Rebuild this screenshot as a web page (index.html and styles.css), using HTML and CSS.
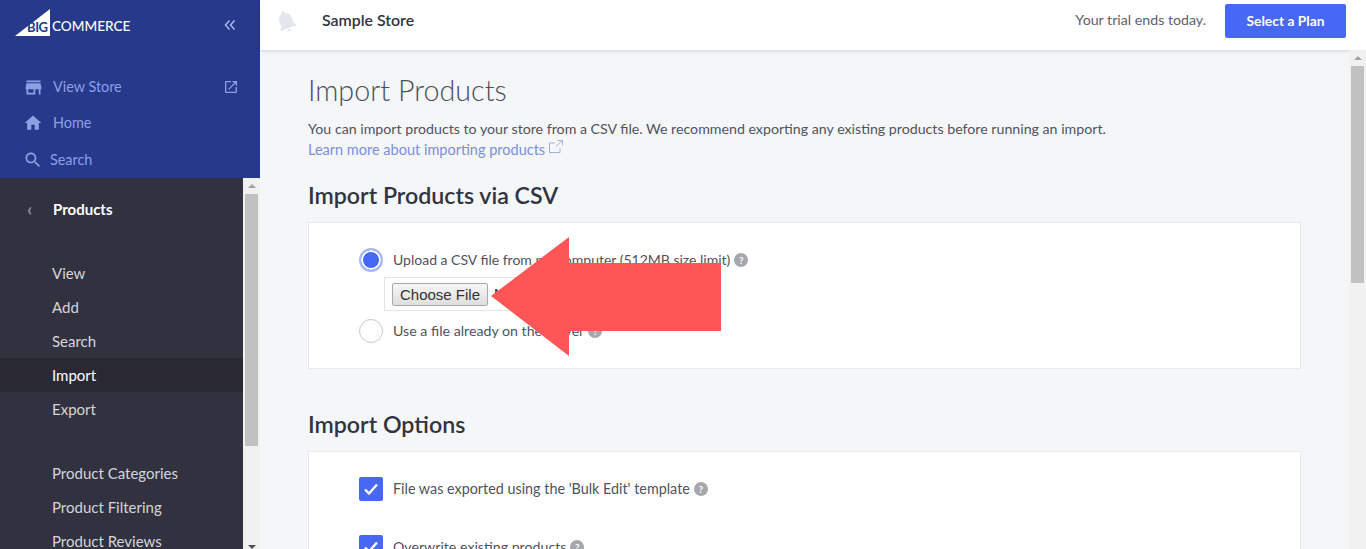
FILE: index.html
```html
<!DOCTYPE html>
<html lang="en">
<head>
	<meta charset="UTF-8">
	<title>Import Products</title>
	<link rel="stylesheet" href="styles.css">
</head>
<body>
	<div class="app">
		<aside class="sidebar">
			<div class="sidebar-top">
				<div class="brand">
					<div class="logo">
						<svg class="logo-mark" viewBox="0 0 35 27"><polygon points="0,27 35,0 35,27" fill="#fff"/></svg>
						<span class="logo-big">BIG</span>
						<span class="logo-commerce">COMMERCE</span>
					</div>
					<svg class="collapse" viewBox="0 0 12 12"><path d="M5.5 1.5L1.5 6l4 4.500M10.500 1.500L6.500 6l4 4.500" fill="none" stroke="currentColor" stroke-width="1.500"/></svg>
				</div>
				<a class="top-link view-store">
					<svg class="icon icon-store" viewBox="0 0 24 24"><path d="M20 4H4v2h16V4zm1 10v-2l-1-5H4l-1 5v2h1v6h10v-6h4v6h2v-6h1zm-9 4H6v-4h6v4z"/></svg>
					<span class="grow">View Store</span>
					<svg class="icon-new" viewBox="0 0 24 24"><path d="M19 19H5V5h7V3H5c-1.110 0-2 .9-2 2v14c0 1.100.89 2 2 2h14c1.100 0 2-.9 2-2v-7h-2v7zM14 3v2h3.590l-9.830 9.830 1.410 1.410L19 6.410V10h2V3h-7z"/></svg>
				</a>
				<a class="top-link">
					<svg class="icon" viewBox="0 0 24 24"><path d="M10 20v-6h4v6h5v-8h3L12 3 2 12h3v8z"/></svg>
					<span class="top-label">Home</span>
				</a>
				<a class="top-link search-link">
					<svg class="icon" viewBox="0 0 24 24"><path d="M15.500 14h-.79l-.28-.27C15.410 12.590 16 11.110 16 9.500 16 5.910 13.090 3 9.500 3S3 5.910 3 9.500 5.910 16 9.500 16c1.610 0 3.090-.59 4.230-1.570l.27.28v.79l5 4.990L20.490 19l-4.990-5zm-6 0C7.010 14 5 11.990 5 9.500S7.010 5 9.500 5 14 7.010 14 9.500 11.990 14 9.500 14z"/></svg>
					<span>Search</span>
				</a>
			</div>
			<div class="sidebar-bottom">
				<nav class="subnav">
					<div class="subnav-title"><span class="back">&lsaquo;</span>Products</div>
					<ul class="subnav-list">
						<li>View</li>
						<li>Add</li>
						<li>Search</li>
						<li class="active">Import</li>
						<li>Export</li>
					</ul>
					<ul class="subnav-list">
						<li>Product Categories</li>
						<li>Product Filtering</li>
						<li>Product Reviews</li>
					</ul>
				</nav>
				<div class="scrollbar">
					<span class="arrow up"></span>
					<span class="thumb thumb-side"></span>
					<span class="arrow down"></span>
				</div>
			</div>
		</aside>

		<div class="page">
			<header class="topbar">
				<svg class="bell" viewBox="0 0 24 24"><path d="M12 22c1.100 0 2-.9 2-2h-4c0 1.100.89 2 2 2zm6-6v-5c0-3.070-1.640-5.640-4.500-6.320V4c0-.83-.67-1.500-1.500-1.500s-1.500.67-1.500 1.500v.68C7.630 5.360 6 7.920 6 11v5l-2 2v1h16v-1l-2-2z"/></svg>
				<span class="store-name">Sample Store</span>
				<span class="trial">Your trial ends today.</span>
				<button class="btn-plan">Select a Plan</button>
			</header>
			<div class="page-body">
				<main class="content">
					<h1>Import Products</h1>
					<p class="intro">You can import products to your store from a CSV file. We recommend exporting any existing products before running an import.</p>
					<a class="learn">Learn more about importing products<svg class="learn-icon" viewBox="0 0 16 16"><path d="M12 9v4.500H1.500V4H7M9.500 1.500h5v5M14.500 1.500L8 7.500" fill="none" stroke="currentColor"/></svg></a>

					<h2>Import Products via CSV</h2>
					<section class="panel panel-csv">
						<div class="field">
							<span class="radio checked"></span>
							<span class="label label-upload">Upload a CSV file from my computer (512MB size limit)</span>
							<span class="help">?</span>
						</div>
						<div class="file-box">
							<button class="btn-file">Choose File</button>
							<span class="file-name">No file chosen</span>
						</div>
						<div class="field">
							<span class="radio"></span>
							<span class="label">Use a file already on the server</span>
							<span class="help">?</span>
						</div>
					</section>

					<h2 class="options-title">Import Options</h2>
					<section class="panel panel-options">
						<div class="field check-field">
							<span class="checkbox"><svg viewBox="0 0 24 24"><path d="M6 12.500l4 4 8-9" fill="none" stroke="#fff" stroke-width="2.400"/></svg></span>
							<span class="label label-bulk">File was exported using the 'Bulk Edit' template</span>
							<span class="help">?</span>
						</div>
						<div class="field check-field">
							<span class="checkbox"><svg viewBox="0 0 24 24"><path d="M6 12.500l4 4 8-9" fill="none" stroke="#fff" stroke-width="2.400"/></svg></span>
							<span class="label">Overwrite existing products</span>
							<span class="help">?</span>
						</div>
					</section>
				</main>
				<div class="scrollbar">
					<span class="arrow up"></span>
					<span class="thumb thumb-main"></span>
				</div>
			</div>
		</div>
	</div>

	<svg class="callout" viewBox="0 0 232 120"><polygon points="0,59 78,0 78,26 230,26 230,94 78,94 78,119" fill="#fe5656"/></svg>
</body>
</html>
```

FILE: styles.css
```css
* {
	box-sizing: border-box;
}

html, body {
	height: 100%;
}

body {
	margin: 0;
	overflow: hidden;
	font-family: "Lato", "Noto Sans", sans-serif;
	font-size: 15px;
	color: #4f5360;
	background-color: #f5f6f8;
}

.app {
	display: flex;
	height: 100%;
}

/* Sidebar */
.sidebar {
	display: flex;
	flex-direction: column;
	flex: none;
	width: 260px;
	height: 100%;
}

.sidebar-top {
	flex: none;
	height: 178px;
	background-color: #26398b;
	color: #8f9fe6;
}

.brand {
	display: flex;
	align-items: center;
	justify-content: space-between;
	height: 50px;
	padding: 0 24px 0 15px;
}

.logo {
	position: relative;
	display: flex;
	align-items: flex-end;
	width: 116px;
	height: 27px;
	margin-top: -6px;
}

.logo-mark {
	width: 35px;
	height: 27px;
}

.logo-big {
	position: absolute;
	left: 12px;
	bottom: 2px;
	font-size: 13px;
	font-weight: 700;
	line-height: 14px;
	letter-spacing: -.4px;
	color: #26398b;
}

.logo-commerce {
	margin: 0 0 2px 2px;
	font-size: 13.600px;
	font-weight: 500;
	color: #fff;
}

.collapse {
	width: 12px;
	height: 12px;
	color: #a9b6f0;
}

.top-link {
	display: flex;
	align-items: center;
	height: 36px;
	padding: 0 21px 0 23px;
	font-size: 14.400px;
}

.view-store {
	margin-top: 19px;
}

.search-link {
	height: 37px;
}

.grow {
	flex: 1;
	margin-bottom: 2px;
}

.top-label {
	margin-bottom: 2px;
}

.icon {
	flex: none;
	width: 20px;
	height: 20px;
	margin-right: 10px;
	fill: currentColor;
}

.icon-store {
	width: 21px;
	height: 21px;
	margin-right: 9px;
}

.search-link .icon {
	margin-right: 7px;
}

.icon-new {
	width: 16px;
	height: 16px;
	fill: currentColor;
}

.sidebar-bottom {
	display: flex;
	flex: 1;
	min-height: 0;
	background-color: #32313f;
}

.subnav {
	flex: 1;
	min-width: 0;
	overflow: hidden;
	color: #d5d5da;
}

.subnav-title {
	display: flex;
	align-items: center;
	height: 62px;
	padding-left: 27px;
	font-weight: 700;
	color: #fff;
}

.back {
	width: 26px;
	font-size: 18px;
	color: #8d8d96;
}

.subnav-list {
	margin: 0 0 30px;
	padding: 0;
	list-style: none;
}

.subnav-list:first-of-type {
	margin-top: 16px;
}

.subnav-list li {
	height: 34px;
	padding-left: 52px;
	line-height: 34px;
}

.subnav-list li.active {
	background-color: #2a2933;
	color: #fff;
}

/* Scrollbars */
.scrollbar {
	position: relative;
	display: flex;
	flex-direction: column;
	flex: none;
	align-items: center;
	width: 17px;
	background-color: #f1f1f1;
}

.thumb {
	width: 13px;
	background-color: #c1c1c1;
}

.thumb-side {
	height: 252px;
	margin-top: 6px;
}

.thumb-main {
	height: 217px;
	margin-top: 6px;
}

.arrow {
	flex: none;
	width: 0;
	height: 0;
	margin-top: 6px;
	border-left: 4px solid transparent;
	border-right: 4px solid transparent;
}

.arrow.up {
	border-bottom: 4px solid #a3a3a3;
}

.arrow.down {
	margin-top: auto;
	margin-bottom: 0;
	border-top: 4px solid #505050;
}

/* Top bar */
.page {
	display: flex;
	flex-direction: column;
	flex: 1;
	min-width: 0;
}

.topbar {
	position: relative;
	display: flex;
	flex: none;
	align-items: center;
	height: 50px;
	padding: 0 20px 8px 13px;
	background-color: #fff;
	box-shadow: 0 1px 3px rgba(0, 0, 0, .15);
}

.bell {
	width: 26px;
	height: 26px;
	margin-right: 23px;
	fill: #e3e6ec;
	transform: rotate(-20deg);
}

.store-name {
	flex: 1;
	margin-bottom: 4px;
	font-size: 15.900px;
	font-weight: 600;
	color: #313440;
}

.trial {
	margin: 0 19px 4px 0;
	font-size: 14.200px;
	color: #5d616c;
}

.btn-plan {
	width: 121px;
	height: 34px;
	padding: 0 0 2px;
	border: none;
	border-radius: 2px;
	background-color: #4767f5;
	color: #fff;
	font-family: inherit;
	font-size: 13.800px;
	font-weight: 700;
}

/* Content */
.page-body {
	display: flex;
	flex: 1;
	min-height: 0;
}

.content {
	flex: 1;
	min-width: 0;
	overflow: hidden;
	padding: 0 48px;
	font-size: 14.200px;
}

h1 {
	margin: 21px 0 0;
	font-size: 28.700px;
	font-weight: 300;
	line-height: 38px;
	color: #4b4f5c;
}

.intro {
	margin: 10px 0 0;
	line-height: 20px;
}

.learn {
	display: flex;
	align-items: flex-start;
	height: 20px;
	font-size: 14.500px;
	line-height: 22px;
	color: #7b8fdb;
}

.learn-icon {
	flex: none;
	width: 16px;
	height: 16px;
	margin-left: 3px;
	color: #a5afd9;
}

h2 {
	margin: 21px 0 12px;
	font-size: 23.200px;
	font-weight: 600;
	line-height: 30px;
	color: #313440;
}

.options-title {
	margin-top: 40px;
}

.panel {
	padding: 25px 50px;
	background-color: #fff;
	border: 1px solid #e8eaee;
}

.panel-csv {
	height: 147px;
}

.field {
	display: flex;
	align-items: center;
	gap: 10px;
	height: 24px;
}

.label {
	margin-bottom: 2px;
}

.label-upload {
	font-size: 14px;
}

.label-bulk {
	font-size: 14.350px;
}

.radio {
	flex: none;
	width: 24px;
	height: 24px;
	border: 1px solid #c8cad0;
	border-radius: 50%;
	background-color: #fff;
}

.radio.checked {
	border: 2px solid #a9b8f8;
	box-shadow: inset 0 0 0 2px #fff;
	background-color: #4767f5;
}

.help {
	flex: none;
	width: 14px;
	height: 14px;
	margin-left: -6px;
	border-radius: 50%;
	background-color: #a5a7ac;
	color: #fff;
	font-size: 10px;
	font-weight: 700;
	line-height: 14px;
	text-align: center;
}

.file-box {
	display: flex;
	align-items: center;
	gap: 6px;
	width: 240px;
	height: 34px;
	margin: 5px 0 8px 25px;
	padding-left: 7px;
	border: 1px solid #e3e4e8;
}

.btn-file {
	width: 96px;
	height: 23px;
	padding: 0;
	border: 1px solid #a9a9a9;
	border-radius: 2px;
	background: linear-gradient(#f6f6f6, #dedede);
	color: #333;
	font-family: "Liberation Sans", Arial, sans-serif;
	font-size: 15px;
}

.file-name {
	font-family: "Liberation Sans", Arial, sans-serif;
	color: #333;
	white-space: nowrap;
}

.panel-options {
	padding-top: 25px;
}

.check-field {
	margin-bottom: 34px;
}

.checkbox {
	flex: none;
	width: 24px;
	height: 24px;
	border-radius: 2px;
	background-color: #4767f5;
}

.checkbox svg {
	display: block;
	width: 24px;
	height: 24px;
}

/* Red arrow drawn over the page */
.callout {
	position: absolute;
	left: 491px;
	top: 237px;
	width: 232px;
	height: 120px;
}
```
